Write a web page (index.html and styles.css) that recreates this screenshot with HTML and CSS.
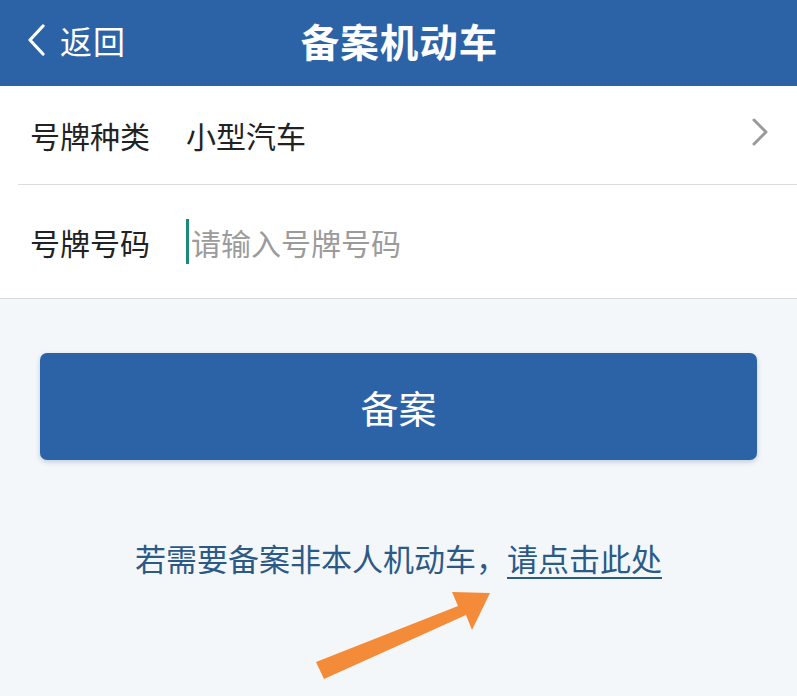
FILE: index.html
```html
<!DOCTYPE html>
<html lang="zh-CN">
<head>
    <meta charset="UTF-8">
    <meta name="viewport" content="width=device-width, initial-scale=1.0">
    <title>备案机动车</title>
    <link rel="stylesheet" href="styles.css">
</head>
<body>
    <header class="topbar">
        <a class="back" href="#">
            <svg class="back-icon" width="20" height="32" viewBox="0 0 20 32"><polyline points="17,2 4,16 17,30" fill="none" stroke="#fff" stroke-width="3.2" stroke-linecap="round" stroke-linejoin="round"/></svg>
            <span>返回</span>
        </a>
        <h1 class="title">备案机动车</h1>
    </header>

    <section class="form">
        <div class="row row-type">
            <span class="label">号牌种类</span>
            <span class="value">小型汽车</span>
            <svg class="chevron" width="18" height="30" viewBox="0 0 18 30"><polyline points="3,3 15,15 3,27" fill="none" stroke="#9a9a9a" stroke-width="3" stroke-linecap="round" stroke-linejoin="round"/></svg>
        </div>
        <div class="row row-number">
            <span class="label">号牌号码</span>
            <span class="input"><i class="caret"></i><span class="placeholder">请输入号牌号码</span></span>
        </div>
    </section>

    <div class="actions">
        <button class="submit">备案</button>
    </div>

    <p class="hint">若需要备案非本人机动车，<a href="#">请点击此处</a></p>

    <svg class="arrow" width="797" height="110" viewBox="0 0 797 110">
        <polygon points="316,92 324,109 466,45 472,60 490,23 452,22 458,36" fill="#f48b39"/>
    </svg>
</body>
</html>
```

FILE: styles.css
```css
body { margin: 0; background: #f4f7fa; font-family: "Noto Sans CJK SC", "Noto Sans", sans-serif; width: 797px; height: 696px; overflow: hidden; position: relative; }
.topbar { height: 86px; background: #2c63a7; color: #fff; display: flex; align-items: center; justify-content: center; position: relative; }
.back { position: absolute; left: 26px; top: 22px; display: flex; align-items: center; gap: 14px; color: #fff; text-decoration: none; font-size: 32px; line-height: 36px; letter-spacing: 1px; }
.back-icon { display: block; }
.title { margin: 0; font-size: 38.5px; font-weight: 700; letter-spacing: 1px; margin-top: -6px; padding-left: 2px; }
.form { background: #fff; border-bottom: 1px solid #d9d9d9; }
.row { display: flex; align-items: center; padding: 0 28px 0 30px; font-size: 30px; color: #222; }
.row-type { height: 98px; border-bottom: 1px solid #dcdcdc; margin-left: 18px; padding-left: 12px; }
.row-number { height: 113px; }
.label { width: 156px; }
.value { flex: 1; }
.chevron { display: block; margin-top: -6px; }
.input { display: flex; align-items: center; }
.caret { display: block; width: 3px; height: 45px; background: #1b8a78; margin-right: 2px; }
.placeholder { color: #9b9b9b; }
.actions { padding: 54px 40px 0; }
.submit { width: 100%; height: 107px; border: none; border-radius: 7px; background: #2c63a7; color: #fff; font-family: inherit; font-size: 38px; box-shadow: 0 2px 5px rgba(40, 80, 130, 0.25); cursor: pointer; padding: 0; }
.hint { margin: 75px 0 0; text-align: center; font-size: 31px; color: #2c5a87; padding-left: 0; }
.hint a { color: #2c5a87; text-decoration: underline; text-decoration-thickness: 2px; text-underline-offset: 6px; }
.arrow { position: absolute; left: 0; top: 570px; }
```
